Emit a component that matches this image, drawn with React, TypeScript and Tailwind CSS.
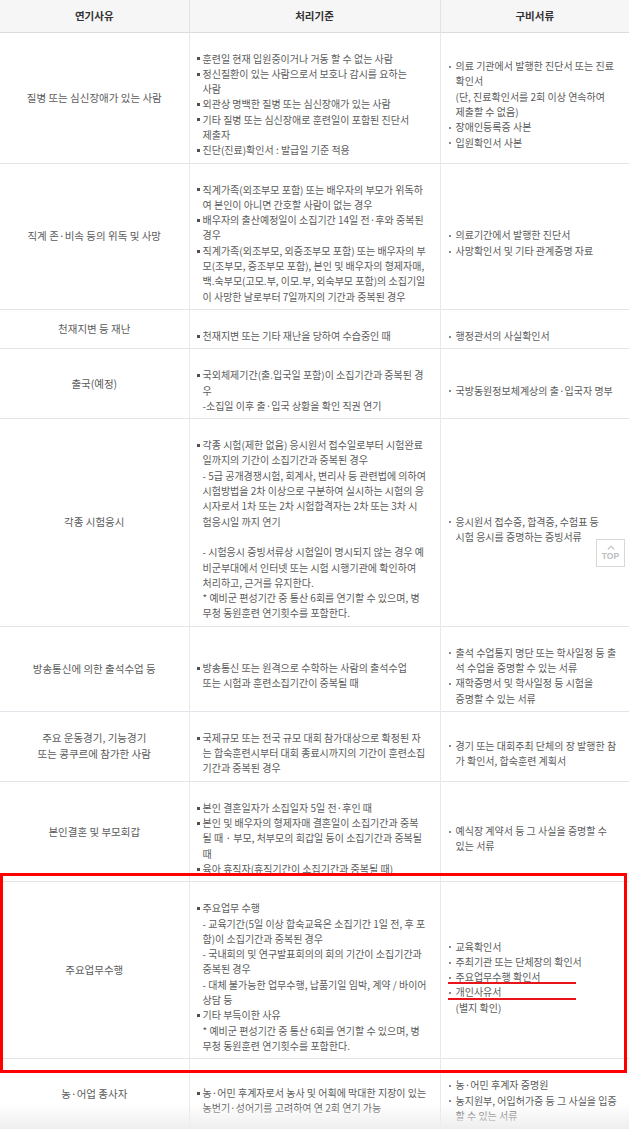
import React from 'react';

type Block = { b?: boolean; lines: string[]; u?: number[] };
type Row = { left: string[]; mid: Block[]; right: Block[]; special?: boolean };

const rows: Row[] = [
  {
    left: ['질병 또는 심신장애가 있는 사람'],
    mid: [
      { b: true, lines: ['훈련일 현재 입원중이거나 거동 할 수 없는 사람'] },
      { b: true, lines: ['정신질환이 있는 사람으로서 보호나 감시를 요하는', '사람'] },
      { b: true, lines: ['외관상 명백한 질병 또는 심신장애가 있는 사람'] },
      { b: true, lines: ['기타 질병 또는 심신장애로 훈련일이 포함된 진단서', '제출자'] },
      { b: true, lines: ['진단(진료)확인서 : 발급일 기준 적용'] },
    ],
    right: [
      { b: true, lines: ['의료 기관에서 발행한 진단서 또는 진료', '확인서', '(단, 진료확인서를 2회 이상 연속하여', '제출할 수 없음)'] },
      { b: true, lines: ['장애인등록증 사본'] },
      { b: true, lines: ['입원확인서 사본'] },
    ],
  },
  {
    left: ['직계 존·비속 등의 위독 및 사망'],
    mid: [
      { b: true, lines: ['직계가족(외조부모 포함) 또는 배우자의 부모가 위독하', '여 본인이 아니면 간호할 사람이 없는 경우'] },
      { b: true, lines: ['배우자의 출산예정일이 소집기간 14일 전·후와 중복된', '경우'] },
      {
        b: true,
        lines: [
          '직계가족(외조부모, 외증조부모 포함) 또는 배우자의 부',
          '모(조부모, 증조부모 포함), 본인 및 배우자의 형제자매,',
          '백.숙부모(고모.부, 이모.부, 외숙부모 포함)의 소집기일',
          '이 사망한 날로부터 7일까지의 기간과 중복된 경우',
        ],
      },
    ],
    right: [
      { b: true, lines: ['의료기간에서 발행한 진단서'] },
      { b: true, lines: ['사망확인서 및 기타 관계증명 자료'] },
    ],
  },
  {
    left: ['천재지변 등 재난'],
    mid: [{ b: true, lines: ['천재지변 또는 기타 재난을 당하여 수습중인 때'] }],
    right: [{ b: true, lines: ['행정관서의 사실확인서'] }],
  },
  {
    left: ['출국(예정)'],
    mid: [
      { b: true, lines: ['국외체제기간(출.입국일 포함)이 소집기간과 중복된 경', '우', '-소집일 이후 출·입국 상황을 확인 직권 연기'] },
    ],
    right: [{ b: true, lines: ['국방동원정보체계상의 출·입국자 명부'] }],
  },
  {
    left: ['각종 시험응시'],
    mid: [
      {
        b: true,
        lines: [
          '각종 시험(제한 없음) 응시원서 접수일로부터 시험완료',
          '일까지의 기간이 소집기간과 중복된 경우',
          '- 5급 공개경쟁시험, 회계사, 변리사 등 관련법에 의하여',
          '시험방법을 2차 이상으로 구분하여 실시하는 시험의 응',
          '시자로서 1차 또는 2차 시험합격자는 2차 또는 3차 시',
          '험응시일 까지 연기',
          '',
          '- 시험응시 증빙서류상 시험일이 명시되지 않는 경우 예',
          '비군부대에서 인터넷 또는 시험 시행기관에 확인하여',
          '처리하고, 근거를 유지한다.',
          '* 예비군 편성기간 중 통산 6회를 연기할 수 있으며, 병',
          '무청 동원훈련 연기횟수를 포함한다.',
        ],
      },
    ],
    right: [{ b: true, lines: ['응시원서 접수증, 합격증, 수험표 등', '시험 응시를 증명하는 증빙서류'] }],
  },
  {
    left: ['방송통신에 의한 출석수업 등'],
    mid: [{ b: true, lines: ['방송통신 또는 원격으로 수학하는 사람의 출석수업', '또는 시험과 훈련소집기간이 중복될 때'] }],
    right: [
      { b: true, lines: ['출석 수업통지 명단 또는 학사일정 등 출', '석 수업을 증명할 수 있는 서류'] },
      { b: true, lines: ['재학증명서 및 학사일정 등 시험을', '증명할 수 있는 서류'] },
    ],
  },
  {
    left: ['주요 운동경기, 기능경기', '또는 콩쿠르에 참가한 사람'],
    mid: [
      {
        b: true,
        lines: [
          '국제규모 또는 전국 규모 대회 참가대상으로 확정된 자',
          '는 합숙훈련시부터 대회 종료시까지의 기간이 훈련소집',
          '기간과 중복된 경우',
        ],
      },
    ],
    right: [{ b: true, lines: ['경기 또는 대회주최 단체의 장 발행한 참', '가 확인서, 합숙훈련 계획서'] }],
  },
  {
    left: ['본인결혼 및 부모회갑'],
    mid: [
      { b: true, lines: ['본인 결혼일자가 소집일자 5일 전·후인 때'] },
      { b: true, lines: ['본인 및 배우자의 형제자매 결혼일이 소집기간과 중복', '될 때 · 부모, 처부모의 회갑일 등이 소집기간과 중복될', '때'] },
      { b: true, lines: ['육아 휴직자(휴직기간이 소집기간과 중복될 때)'] },
    ],
    right: [{ b: true, lines: ['예식장 계약서 등 그 사실을 증명할 수', '있는 서류'] }],
  },
  {
    special: true,
    left: ['주요업무수행'],
    mid: [
      {
        b: true,
        lines: [
          '주요업무 수행',
          '- 교육기간(5일 이상 합숙교육은 소집기간 1일 전, 후 포',
          '함)이 소집기간과 중복된 경우',
          '- 국내회의 및 연구발표회의의 회의 기간이 소집기간과',
          '중복된 경우',
          '- 대체 불가능한 업무수행, 납품기일 임박, 계약 / 바이어',
          '상담 등',
        ],
      },
      { b: true, lines: ['기타 부득이한 사유', '* 예비군 편성기간 중 통산 6회를 연기할 수 있으며, 병', '무청 동원훈련 연기횟수를 포함한다.'] },
    ],
    right: [
      { b: true, lines: ['교육확인서'] },
      { b: true, lines: ['주최기관 또는 단체장의 확인서'] },
      { b: true, lines: ['주요업무수행 확인서'], u: [0] },
      { b: true, lines: ['개인사유서', '(별지 확인)'], u: [0] },
    ],
  },
  {
    left: ['농·어업 종사자'],
    mid: [{ b: true, lines: ['농·어민 후계자로서 농사 및 어획에 막대한 지장이 있는', '농번기·성어기를 고려하여 연 2회 연기 가능'] }],
    right: [
      { b: true, lines: ['농·어민 후계자 증명원'] },
      { b: true, lines: ['농지원부, 어입허가증 등 그 사실을 입증', '할 수 있는 서류'] },
    ],
  },
];

function Cell({ blocks, kind }: { blocks: Block[]; kind: 'mid' | 'right' }) {
  return (
    <div className="flex flex-col">
      {blocks.map((blk, i) => (
        <div key={i} className="flex flex-col">
          {blk.lines.map((ln, j) => {
            const underlined = blk.u && blk.u.includes(j);
            return (
              <div
                key={j}
                className={
                  underlined
                    ? 'whitespace-nowrap leading-[15.3px] h-[15.3px] -ml-[8px] pl-[8px] w-[128px] border-b-2 border-[#e8141a]'
                    : 'whitespace-nowrap leading-[15.3px] h-[15.3px]'
                }
              >
                {j === 0 && blk.b ? (
                  kind === 'mid' ? (
                    <span className="inline-block align-middle -ml-[6px] mr-[3px] mb-[2px] w-[3px] h-[3px] bg-[#505050]" />
                  ) : (
                    <span className="inline-block align-middle -ml-[7px] mr-[5px] mb-[1px] w-[2px] h-[2px] bg-[#8a8a8a]" />
                  )
                ) : null}
                {ln === '' ? '\u00a0' : ln}
              </div>
            );
          })}
        </div>
      ))}
    </div>
  );
}

export default function App() {
  return (
    <div className="relative w-[629px] bg-white font-['Noto_Sans_CJK_KR','Noto_Sans',sans-serif] text-[10px] text-[#5b5b5b]">
      <table className="w-[629px] table-fixed border-collapse">
        <colgroup>
          <col className="w-[189px]" />
          <col className="w-[251px]" />
          <col className="w-[189px]" />
        </colgroup>
        <thead>
          <tr className="h-[32px] bg-[#f6f6f6] border-b border-[#dcdcdc]">
            <th className="text-center align-middle font-bold text-[#333] text-[10.5px]">연기사유</th>
            <th className="text-center align-middle font-bold text-[#333] text-[10.5px] border-l border-[#e2e2e2]">처리기준</th>
            <th className="text-center align-middle font-bold text-[#333] text-[10.5px] border-l border-[#e2e2e2]">구비서류</th>
          </tr>
        </thead>
        <tbody>
          {rows.map((r, i) => (
            <tr key={i} className="border-b border-[#e1e5ea]">
              <td className={`${r.special ? 'relative' : ''} p-0 text-center align-middle text-[10.5px] leading-[16px]`}>
                {r.left.map((l, k) => (
                  <div key={k} className="whitespace-nowrap">
                    {l}
                  </div>
                ))}
                {r.special ? (
                  <div className="pointer-events-none absolute left-0 top-[-9px] w-[627px] h-[200px] border-[3px] border-[#ff0000] z-10" />
                ) : null}
              </td>
              <td className="align-middle border-l border-[#e6e9ed] pl-[13px] pr-0 pt-[18px] pb-[5px]">
                <Cell blocks={r.mid} kind="mid" />
              </td>
              <td className="align-middle border-l border-[#e6e9ed] pl-[15px] pr-0 pt-[18px] pb-[5px]">
                <Cell blocks={r.right} kind="right" />
              </td>
            </tr>
          ))}
        </tbody>
      </table>

      <div className="absolute left-[596px] top-[539px] w-[29px] h-[28px] bg-white border border-[#d8d8d8] flex flex-col items-center justify-center">
        <svg width="8" height="5" viewBox="0 0 8 5" className="mb-[1px]">
          <path d="M0.8 4.3 L4 1.2 L7.2 4.3" fill="none" stroke="#b8b8b8" strokeWidth="1.1" />
        </svg>
        <div className="text-[8.5px] leading-[10px] font-bold text-[#bdbdbd] font-['Liberation_Sans',sans-serif]">TOP</div>
      </div>

      <div className="pointer-events-none absolute left-0 top-[1104px] w-[629px] h-[25px] bg-gradient-to-b from-transparent to-[#eeeeee]" />
    </div>
  );
}
